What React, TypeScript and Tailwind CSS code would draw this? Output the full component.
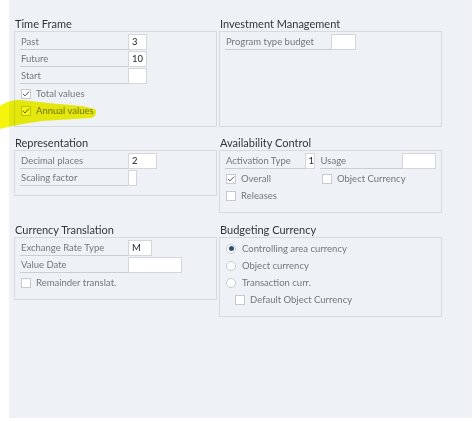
import React from "react";

const font = { fontFamily: "Lato, 'Open Sans', sans-serif" };

function Box({ title, grow, children }: { title: string; grow?: boolean; children: React.ReactNode }) {
  return (
    <div className={grow ? "flex-1 flex flex-col" : "flex flex-col"}>
      <div className="text-[11px] leading-[14px] text-[#32363a] pl-[1px]">{title}</div>
      <div
        className={
          grow
            ? "flex-1 border border-[#d6dbe0] pl-[5px] pr-[5px] pt-[2px] pb-[7px]"
            : "border border-[#d6dbe0] pl-[5px] pr-[5px] pt-[2px] pb-[8px]"
        }
      >
        {children}
      </div>
    </div>
  );
}

function Input({ w, value }: { w: string; value?: string }) {
  return (
    <div className={`${w} h-[16px] bg-white border border-[#d3d7db] text-[9.5px] leading-[14px] text-[#32363a] pl-[3px] font-medium`}>
      {value}
    </div>
  );
}

function Field({ label, input, value, lw = "w-[108px]" }: { label: string; input: string; value?: string; lw?: string }) {
  return (
    <div className="flex h-[17px] items-start">
      <div className={`${lw} h-[16px] border-b border-[#c9ced3] text-[9.5px] leading-[15px] text-[#74777a] pl-[1px]`}>
        {label}
      </div>
      <Input w={input} value={value} />
    </div>
  );
}

function Check({ checked, label }: { checked?: boolean; label: string }) {
  return (
    <div className="flex h-[17px] items-center gap-[5px] pl-[1px]">
      <span className="w-[10px] h-[10px] bg-white border border-[#c6cbd0] flex items-center justify-center shrink-0">
        {checked && (
          <svg viewBox="0 0 10 10" className="w-[8px] h-[8px]" fill="none">
            <path d="M1.5 5.2l2.2 2.2L8.5 2.4" stroke="#3a3d40" strokeWidth="1.1" strokeLinecap="round" strokeLinejoin="round" />
          </svg>
        )}
      </span>
      <span className="text-[9.5px] leading-[15px] text-[#74777a]">{label}</span>
    </div>
  );
}

function Radio({ selected, label }: { selected?: boolean; label: string }) {
  return (
    <div className="flex h-[17px] items-center gap-[6px] pl-[1px]">
      <span className="w-[10px] h-[10px] rounded-full bg-white border border-[#c6cbd0] flex items-center justify-center shrink-0">
        {selected && <span className="w-[5px] h-[5px] rounded-full bg-[#2a4f77]" />}
      </span>
      <span className="text-[9.5px] leading-[15px] text-[#74777a]">{label}</span>
    </div>
  );
}

export default function App() {
  return (
    <div className="w-[474px] h-[421px] bg-white relative overflow-hidden" style={font}>
      <div className="ml-[9px] w-[463px] h-[418px] bg-[#eef2f6] pt-[17px] pl-[5px]">
        {/* row 1 */}
        <div className="flex gap-[2px] items-stretch">
          <div className="w-[203px] flex flex-col">
            <Box title="Time Frame" grow>
              <Field label="Past" input="w-[19px]" value="3" />
              <Field label="Future" input="w-[19px]" value="10" />
              <Field label="Start" input="w-[19px]" />
              <Check checked label="Total values" />
              <Check checked label="Annual values" />
            </Box>
          </div>
          <div className="w-[223px] flex flex-col">
            <Box title="Investment Management" grow>
              <Field label="Program type budget" input="w-[25px]" lw="w-[106px]" />
            </Box>
          </div>
        </div>

        {/* row 2 */}
        <div className="flex gap-[2px] items-start mt-[9px]">
          <div className="w-[203px]">
            <Box title="Representation">
              <Field label="Decimal places" input="w-[29px]" value="2" />
              <Field label="Scaling factor" input="w-[9px]" />
            </Box>
          </div>
          <div className="w-[223px]">
            <Box title="Availability Control">
              <div className="flex h-[17px] items-start">
                <div className="w-[80px] h-[16px] border-b border-[#c9ced3] text-[9.5px] leading-[15px] text-[#74777a] pl-[1px]">
                  Activation Type
                </div>
                <Input w="w-[10px]" value="1" />
                <div className="ml-[5px] w-[83px] h-[16px] border-b border-[#c9ced3] text-[9.5px] leading-[15px] text-[#74777a] pl-[1px]">
                  Usage
                </div>
                <Input w="w-[34px]" />
              </div>
              <div className="flex">
                <div className="w-[96px]">
                  <Check checked label="Overall" />
                </div>
                <Check label="Object Currency" />
              </div>
              <Check label="Releases" />
            </Box>
          </div>
        </div>

        {/* row 3 */}
        <div className="flex gap-[2px] items-start mt-[10px]">
          <div className="w-[203px]">
            <Box title="Currency Translation">
              <Field label="Exchange Rate Type" input="w-[24px]" value="M" />
              <Field label="Value Date" input="w-[54px]" />
              <Check label="Remainder translat." />
            </Box>
          </div>
          <div className="w-[223px]">
            <Box title="Budgeting Currency">
              <Radio selected label="Controlling area currency" />
              <Radio label="Object currency" />
              <Radio label="Transaction curr." />
              <div className="pl-[9px]">
                <Check label="Default Object Currency" />
              </div>
            </Box>
          </div>
        </div>
      </div>

      {/* marker highlight */}
      <svg className="absolute left-0 top-0 w-[110px] h-[135px] pointer-events-none mix-blend-multiply" viewBox="0 0 110 135">
        <path
          d="M0 106 C6 102 12 100 20 100 L58 104 Q90 106 96 110 Q97 117 90 118 L42 121 Q18 124 0 129 Z"
          fill="#f4f40c"
        />
      </svg>
    </div>
  );
}
